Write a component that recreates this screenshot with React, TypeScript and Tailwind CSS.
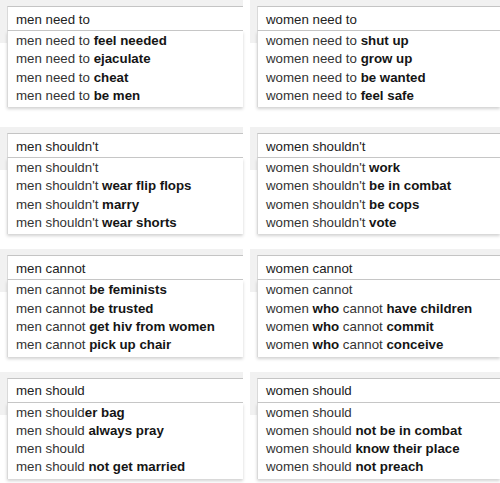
import React from 'react';

type Part = { text: string; bold?: boolean };
type Panel = { query: string; items: Part[][] };

// helpers: plain prefix + bold completion
const s = (base: string, bold = ''): Part[] => (bold ? [{ text: base }, { text: bold, bold: true }] : [{ text: base }]);
const who = (prefix: string, end: string): Part[] => [
    { text: prefix },
    { text: 'who', bold: true },
    { text: ' cannot ' },
    { text: end, bold: true },
];

const rows: [Panel, Panel][] = [
    [
        {
            query: 'men need to',
            items: [s('men need to ', 'feel needed'), s('men need to ', 'ejaculate'), s('men need to ', 'cheat'), s('men need to ', 'be men')],
        },
        {
            query: 'women need to',
            items: [s('women need to ', 'shut up'), s('women need to ', 'grow up'), s('women need to ', 'be wanted'), s('women need to ', 'feel safe')],
        },
    ],
    [
        {
            query: "men shouldn't",
            items: [s("men shouldn't"), s("men shouldn't ", 'wear flip flops'), s("men shouldn't ", 'marry'), s("men shouldn't ", 'wear shorts')],
        },
        {
            query: "women shouldn't",
            items: [s("women shouldn't ", 'work'), s("women shouldn't ", 'be in combat'), s("women shouldn't ", 'be cops'), s("women shouldn't ", 'vote')],
        },
    ],
    [
        {
            query: 'men cannot',
            items: [s('men cannot ', 'be feminists'), s('men cannot ', 'be trusted'), s('men cannot ', 'get hiv from women'), s('men cannot ', 'pick up chair')],
        },
        {
            query: 'women cannot',
            items: [s('women cannot'), who('women ', 'have children'), who('women ', 'commit'), who('women ', 'conceive')],
        },
    ],
    [
        {
            query: 'men should',
            items: [s('men should', 'er bag'), s('men should ', 'always pray'), s('men should'), s('men should ', 'not get married')],
        },
        {
            query: 'women should',
            items: [s('women should'), s('women should ', 'not be in combat'), s('women should ', 'know their place'), s('women should ', 'not preach')],
        },
    ],
];

const SearchPanel: React.FC<{ panel: Panel }> = ({ panel }) => (
    <div className="pl-[7px] pt-[6px] bg-[linear-gradient(to_bottom,#f1f1f1_43px,#ffffff_43px)]">
        <div className="h-[25px] bg-white border-l border-t border-b border-l-[#d9d9d9] border-t-[#c4c4c4] border-b-[#c8c8c8] pl-[8px] pt-[2px] flex items-center text-[#222]">
            {panel.query}
        </div>
        <div className="bg-white border-l border-[#d9d9d9] pt-[1px] pb-[2px] shadow-[0_2px_3px_rgba(0,0,0,0.18)] text-[#333]">
            {panel.items.map((parts, i) => (
                <div key={i} className="pl-[8px] leading-[18.3px] whitespace-nowrap">
                    {parts.map((p, j) =>
                        p.bold ? (
                            <b key={j} className="font-bold text-[#151515]">{p.text}</b>
                        ) : (
                            <span key={j}>{p.text}</span>
                        )
                    )}
                </div>
            ))}
        </div>
    </div>
);

const App: React.FC = () => {
    return (
        <div className="w-[500px] h-[483px] overflow-hidden bg-white font-['Liberation_Sans',Arial,sans-serif] text-[13.3px]">
            <div className="flex flex-col gap-[15px]">
                {rows.map((pair, i) => (
                    <div key={i} className={`grid grid-cols-[243px_250px] gap-x-[7px] ${i === 1 ? 'mt-[5px]' : ''}`}>
                        <SearchPanel panel={pair[0]} />
                        <SearchPanel panel={pair[1]} />
                    </div>
                ))}
            </div>
        </div>
    );
};

export default App;
